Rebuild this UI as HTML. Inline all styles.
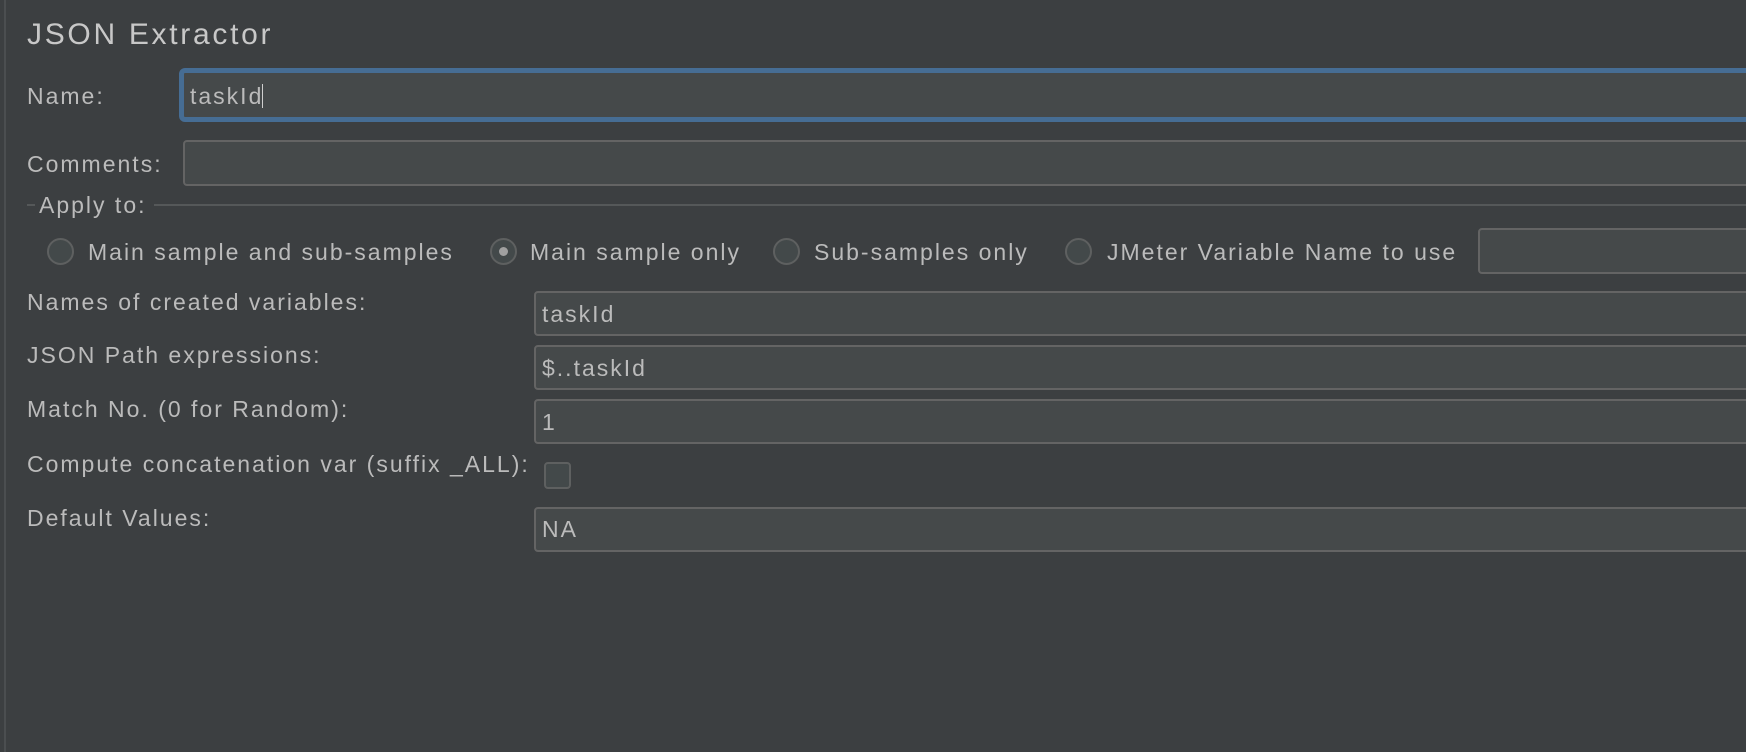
<!DOCTYPE html>
<html><head><meta charset="utf-8"><style>
html,body{margin:0;padding:0;}
body{width:1746px;height:752px;background:#3c3f41;position:relative;overflow:hidden;font-family:"Liberation Sans",sans-serif;color:#bbbbbb;}
.t{position:absolute;white-space:nowrap;line-height:1;font-size:23px;letter-spacing:2px;}
.f{position:absolute;background:#45494a;border:2px solid #646464;border-radius:4px;box-sizing:border-box;right:-10px;}
.r{position:absolute;width:27px;height:27px;border-radius:50%;border:2px solid #5e6060;background:#43494a;box-sizing:border-box;}
</style></head><body>
<div style="position:absolute;left:4px;top:0;width:2px;height:752px;background:#4b4e50"></div>
<div class="t" style="left:27px;top:20px;font-size:30px;letter-spacing:2.7px;color:#c8c8c8">JSON Extractor</div>

<div class="t" style="left:27px;top:85px">Name:</div>
<div style="position:absolute;left:179px;top:68px;right:-10px;height:54px;border:5px solid #466d94;border-radius:6px;box-sizing:border-box;background:#45494a"></div>
<div class="t" style="left:190px;top:84px">taskId<span style="display:inline-block;width:1px;height:24px;background:#cfcfcf;vertical-align:-4px;margin-left:-1px"></span></div>

<div class="t" style="left:27px;top:153px">Comments:</div>
<div class="f" style="left:183px;top:140px;height:46px"></div>

<div style="position:absolute;left:27px;top:204px;width:8px;height:2px;background:#555859"></div>
<div style="position:absolute;left:154px;top:204px;right:0;height:2px;background:#555859"></div>
<div class="t" style="left:39px;top:194px">Apply to:</div>

<div class="r" style="left:47px;top:238px"></div>
<div class="t" style="left:88px;top:241px">Main sample and sub-samples</div>
<div class="r" style="left:490px;top:238px"><div style="position:absolute;left:7px;top:7px;width:9px;height:9px;border-radius:50%;background:#a0a0a0"></div></div>
<div class="t" style="left:530px;top:241px">Main sample only</div>
<div class="r" style="left:773px;top:238px"></div>
<div class="t" style="left:814px;top:241px">Sub-samples only</div>
<div class="r" style="left:1065px;top:238px"></div>
<div class="t" style="left:1107px;top:241px">JMeter Variable Name to use</div>
<div class="f" style="left:1478px;top:228px;height:46px"></div>

<div class="t" style="left:27px;top:291px">Names of created variables:</div>
<div class="f" style="left:534px;top:291px;height:45px"></div>
<div class="t" style="left:542px;top:303px">taskId</div>

<div class="t" style="left:27px;top:344px">JSON Path expressions:</div>
<div class="f" style="left:534px;top:345px;height:45px"></div>
<div class="t" style="left:542px;top:357px">$..taskId</div>

<div class="t" style="left:27px;top:398px">Match No. (0 for Random):</div>
<div class="f" style="left:534px;top:399px;height:45px"></div>
<div class="t" style="left:542px;top:411px">1</div>

<div class="t" style="left:27px;top:453px">Compute concatenation var (suffix _ALL):</div>
<div style="position:absolute;left:544px;top:462px;width:27px;height:27px;border:2px solid #5e6060;border-radius:4px;box-sizing:border-box;background:#43494a"></div>

<div class="t" style="left:27px;top:507px">Default Values:</div>
<div class="f" style="left:534px;top:507px;height:45px"></div>
<div class="t" style="left:542px;top:518px">NA</div>
</body></html>
